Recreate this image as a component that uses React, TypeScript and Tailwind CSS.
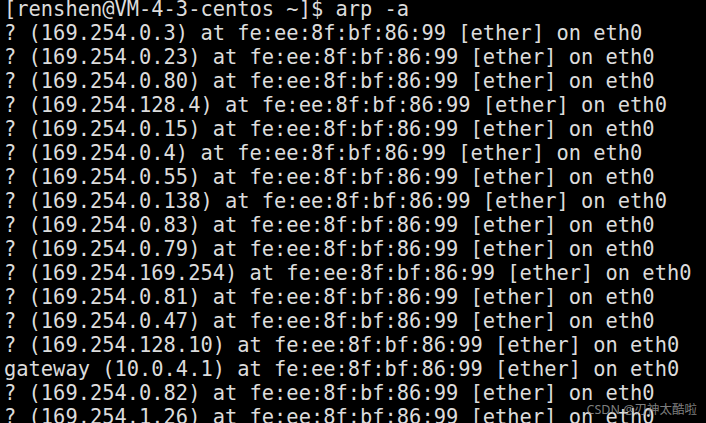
const lines = [
  "[renshen@VM-4-3-centos ~]$ arp -a",
  "? (169.254.0.3) at fe:ee:8f:bf:86:99 [ether] on eth0",
  "? (169.254.0.23) at fe:ee:8f:bf:86:99 [ether] on eth0",
  "? (169.254.0.80) at fe:ee:8f:bf:86:99 [ether] on eth0",
  "? (169.254.128.4) at fe:ee:8f:bf:86:99 [ether] on eth0",
  "? (169.254.0.15) at fe:ee:8f:bf:86:99 [ether] on eth0",
  "? (169.254.0.4) at fe:ee:8f:bf:86:99 [ether] on eth0",
  "? (169.254.0.55) at fe:ee:8f:bf:86:99 [ether] on eth0",
  "? (169.254.0.138) at fe:ee:8f:bf:86:99 [ether] on eth0",
  "? (169.254.0.83) at fe:ee:8f:bf:86:99 [ether] on eth0",
  "? (169.254.0.79) at fe:ee:8f:bf:86:99 [ether] on eth0",
  "? (169.254.169.254) at fe:ee:8f:bf:86:99 [ether] on eth0",
  "? (169.254.0.81) at fe:ee:8f:bf:86:99 [ether] on eth0",
  "? (169.254.0.47) at fe:ee:8f:bf:86:99 [ether] on eth0",
  "? (169.254.128.10) at fe:ee:8f:bf:86:99 [ether] on eth0",
  "gateway (10.0.4.1) at fe:ee:8f:bf:86:99 [ether] on eth0",
  "? (169.254.0.82) at fe:ee:8f:bf:86:99 [ether] on eth0",
  "? (169.254.1.26) at fe:ee:8f:bf:86:99 [ether] on eth0",
];

const App = () => {
  return (
    <main className="relative w-[706px] h-[423px] overflow-hidden bg-black">
      <pre className="pl-[4px] -mt-[3px] font-['DejaVu_Sans_Mono',monospace] text-[20.4px] leading-[24px] text-[#dcdcdc] whitespace-pre">
        {lines.join("\n")}
      </pre>
      {/* watermark */}
      <span className="absolute right-[9px] bottom-[5px] font-['Noto_Sans','Noto_Sans_CJK_SC',sans-serif] text-[12.5px] leading-[16px] text-[#a0a0a0]/80">
        CSDN @刃神太酷啦
      </span>
    </main>
  );
};

export default App;
